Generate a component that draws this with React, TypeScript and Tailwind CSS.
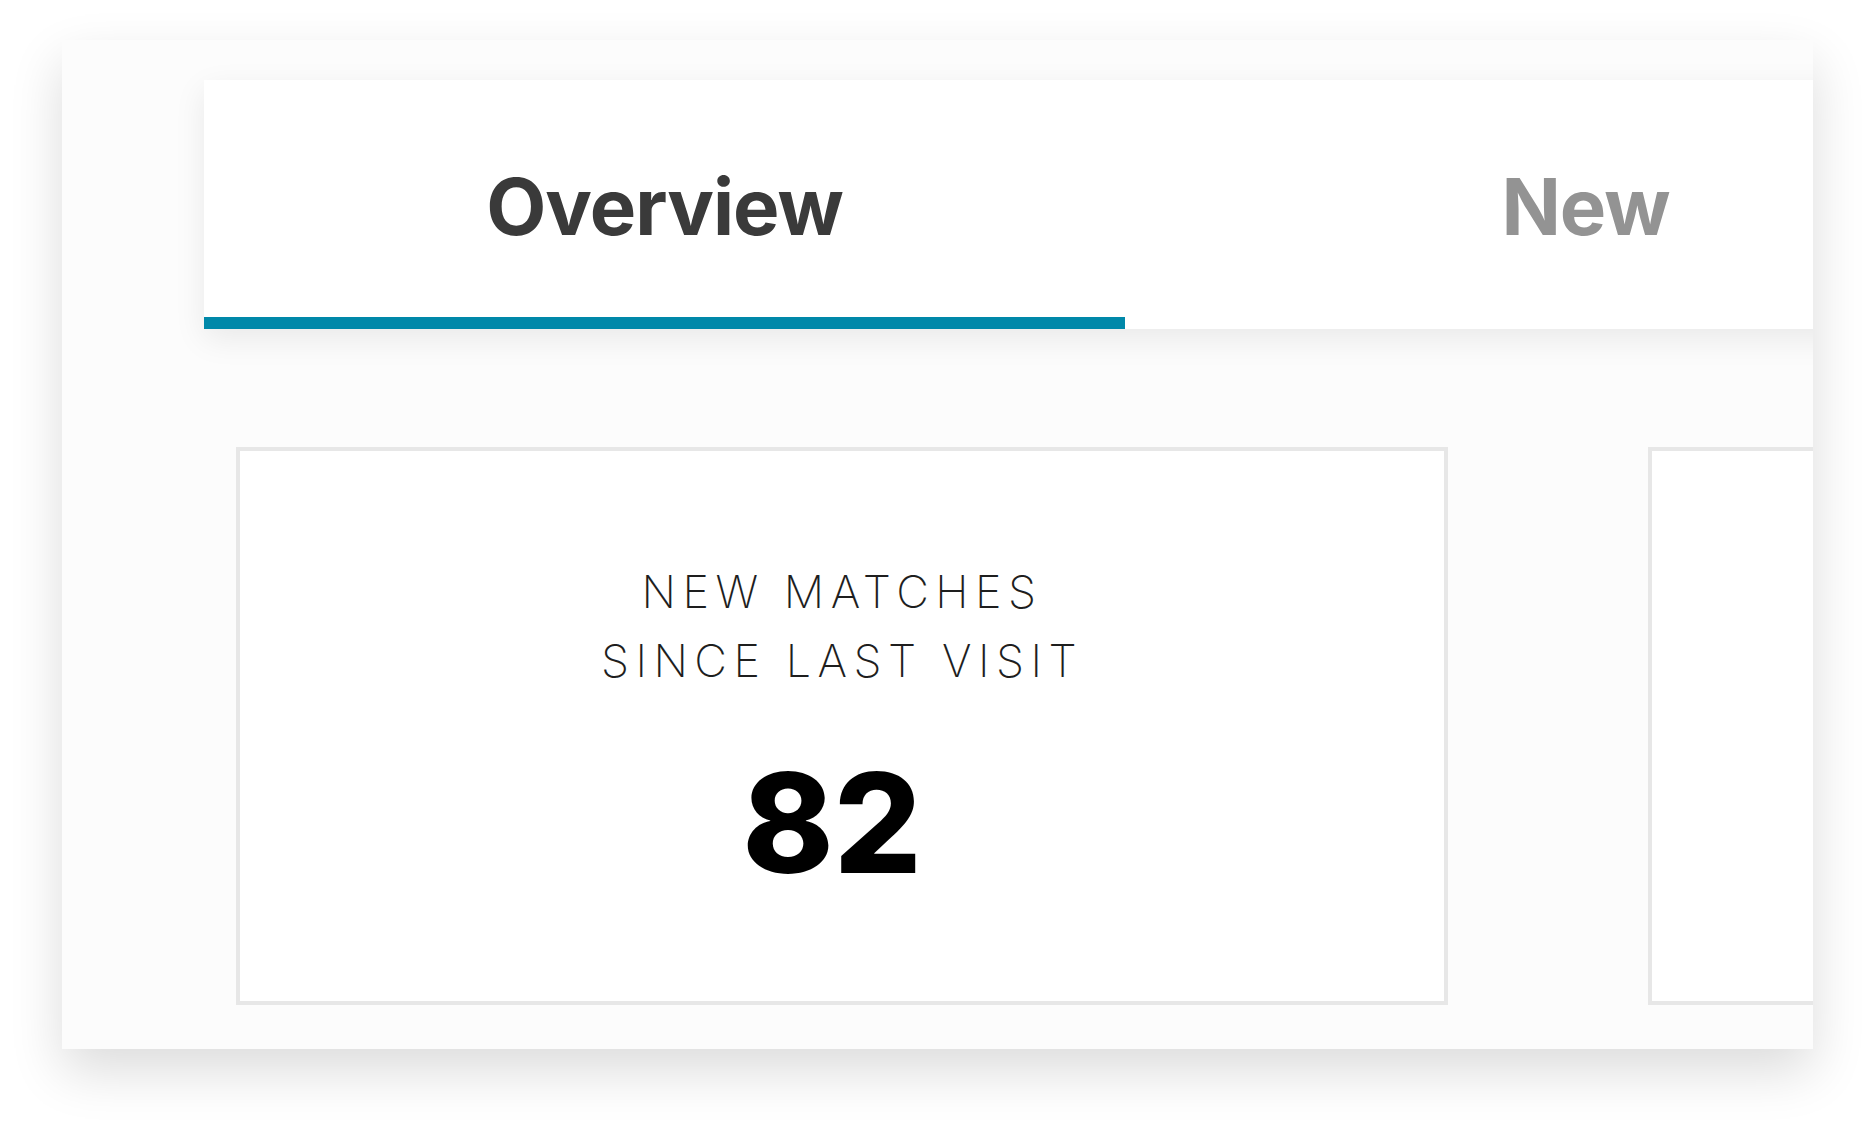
import React from 'react';

const Tab = ({ label, active }: { label: string; active?: boolean }) => (
  <div
    className={
      active
        ? 'w-[921px] h-[249px] shrink-0 flex justify-center pt-[88px] border-b-[12px] border-[#0088a9]'
        : 'w-[921px] h-[249px] shrink-0 flex justify-center pt-[88px]'
    }
  >
    <span
      className={
        active
          ? 'text-[78px] leading-none font-bold tracking-[-1px] text-[#3a3a3a]'
          : 'text-[78px] leading-none font-bold tracking-[-1px] text-[#939393]'
      }
    >
      {label}
    </span>
  </div>
);

const StatCard = ({ title, sub, value }: { title?: string; sub?: string; value?: string }) => (
  <div className="w-[1212px] h-[558px] shrink-0 border-4 border-[#e7e7e7] bg-white flex flex-col items-center pt-[106px]">
    {title && (
      <div className="text-[45px] leading-[69px] font-extralight tracking-[6.5px] text-[#1e1e1e] text-center">
        <div>{title}</div>
        <div>{sub}</div>
      </div>
    )}
    {value && (
      <div className="mt-[59px] mr-[20px] text-[138px] leading-none font-extrabold text-black">{value}</div>
    )}
  </div>
);

export default function App() {
  return (
    <div className="min-h-screen w-full bg-white pt-[40px] pl-[62px]" style={{ fontFamily: 'Inter, "Noto Sans", sans-serif' }}>
      <div className="w-[1751px] h-[1009px] bg-[#fcfcfc] overflow-hidden shadow-[0_22px_50px_rgba(0,0,0,0.14)]">
        <div className="ml-[142px] mt-[40px] w-max flex bg-white shadow-[0_10px_30px_rgba(0,0,0,0.08)]">
          <Tab label="Overview" active />
          <Tab label="New" />
        </div>

        <div className="ml-[174px] mt-[118px] flex gap-[200px]">
          <StatCard title="NEW MATCHES" sub="SINCE LAST VISIT" value="82" />
          <StatCard />
        </div>
      </div>
    </div>
  );
}
